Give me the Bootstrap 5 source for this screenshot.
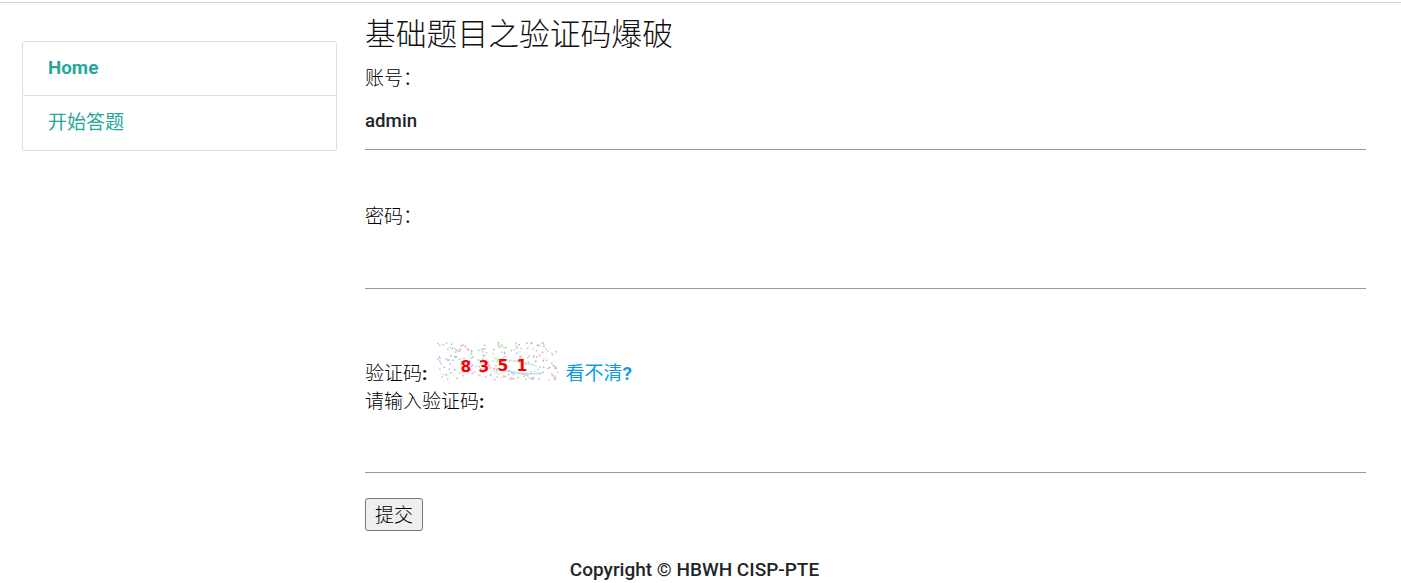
<!DOCTYPE html>
<html lang="zh-CN">
<head>
<meta charset="utf-8">
<title>基础题目之验证码爆破</title>
<link href="https://cdn.jsdelivr.net/npm/bootstrap@5.3.0/dist/css/bootstrap.min.css" rel="stylesheet">
<style>
html,body{height:583px;overflow:hidden}
body{font-family:Roboto,"Noto Sans CJK SC",sans-serif;font-size:19px;line-height:28px;color:#212529;background:#fff}
.top-rule{height:1px;background:#d3d3d3;margin-top:2px}
.shell{padding:0 35px 0 22px;gap:28px}
.side{width:315px;flex:none;margin-top:38px}
.side .list-group{border-radius:3px}
.side .list-group-item{padding:12px 25px;height:55px;line-height:29px;font-size:19px;border-color:#dfdfdf;color:#26a69a}
.side .item-strong{font-weight:700;font-size:18.8px}
.main-col{flex:1;min-width:0;padding-top:14px}
.page-title{font-size:30.8px;line-height:36px;font-weight:300;margin:0 0 12px;color:#111}
.field-label{display:block;margin:0;height:28px;font-weight:300;color:#000}
.line-input{display:block;width:100%;border:0;border-bottom:1px solid #999;outline:0;background:transparent;font:500 18.7px/28px Roboto,sans-serif;color:#212529;padding:0;height:57px}
.line-tall{height:58px}
.gap-a{height:53px}
.gap-b{height:52px}
.captcha-row{height:47px;display:flex;align-items:flex-end;white-space:nowrap;font-weight:300;color:#000}
.captcha-img{display:block;width:125px;height:42px;margin:0 4px 5px 9px;flex:none}
.captcha-row a{color:#0f9ae8;text-decoration:none;font-weight:400}
.colon-mid{font-weight:700}
.submit-btn{font:300 19px/1.2 Roboto,"Noto Sans CJK SC",sans-serif;padding:6px 8px 2px;height:33px;width:58px;background:#efefef;border:1px solid #767676;border-radius:3px;color:#000;margin-top:25px;display:block}
.foot-note{width:1389px;text-align:center;font-weight:500;font-size:19px;line-height:28px;margin:25px 0 0}
</style>
</head>
<body>
<div class="top-rule"></div>
<div class="d-flex shell">
  <aside class="side">
    <div class="list-group">
      <a class="list-group-item item-strong" href="#">Home</a>
      <a class="list-group-item" href="#">开始答题</a>
    </div>
  </aside>
  <main class="main-col">
    <h3 class="page-title">基础题目之验证码爆破</h3>
    <form onsubmit="return false">
      <label class="field-label">账号：</label>
      <input class="line-input" type="text" value="admin">
      <div class="gap-a"></div>
      <label class="field-label">密码：</label>
      <input class="line-input line-tall" type="password">
      <div class="gap-b"></div>
      <div class="captcha-row">
        <span>验证码<span class="colon-mid">:</span></span>
        <svg class="captcha-img" viewBox="0 0 125 42" id="cap" role="img" aria-label="验证码">
          <path d="M60 18 Q82 19 101 25" fill="none" stroke="#cfeec8" stroke-width="1.5"/>
          <path d="M61 27 Q84 35 107 32" fill="none" stroke="#b4dcec" stroke-width="1.5"/>
          <g fill="#f00" font-family="'DejaVu Sans',sans-serif" font-weight="700" font-size="15.5" text-anchor="middle">
            <text x="30" y="31">8</text><text x="48" y="31">3</text><text x="67" y="30">5</text><text x="86" y="30">1</text>
          </g>
        </svg>
        <a href="#">看不清<span class="colon-mid">?</span></a>
      </div>
      <label class="field-label">请输入验证码<span class="colon-mid">:</span></label>
      <input class="line-input" type="text">
      <button class="submit-btn" type="button">提交</button>
    </form>
  </main>
</div>
<p class="foot-note">Copyright © HBWH CISP-PTE</p>
<script src="https://cdn.jsdelivr.net/npm/bootstrap@5.3.0/dist/js/bootstrap.bundle.min.js"></script>
<script>
var s=11,c=['#f4a8bc','#a4ecb4','#a8d4f6','#d0acf2','#f2d498','#b4b4b4','#90e490','#f29c9c','#b8b8f2','#88dcdc'];
function r(){s=(s*16807)%2147483647;return s/2147483647}
var g=document.getElementById('cap'),ns='http://www.w3.org/2000/svg';
for(var i=0;i<230;i++){var e=document.createElementNS(ns,'rect');
e.setAttribute('x',(r()*120+1).toFixed(1));e.setAttribute('y',(r()*37+1).toFixed(1));
e.setAttribute('width',1.5);e.setAttribute('height',1.5);e.setAttribute('fill',c[Math.floor(r()*c.length)]);
g.insertBefore(e,g.firstChild)}
</script>
</body>
</html>
